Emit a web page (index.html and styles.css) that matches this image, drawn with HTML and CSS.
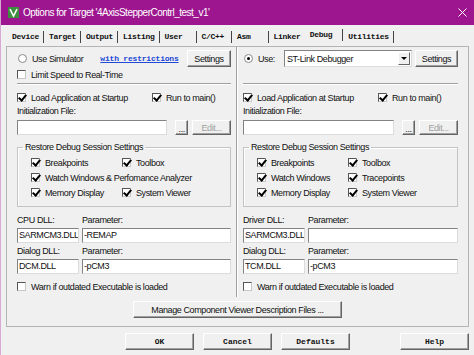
FILE: index.html
```html
<!DOCTYPE html>
<html lang="en">
<head>
  <meta charset="UTF-8">
  <title>Options for Target</title>
  <link rel="stylesheet" href="styles.css">
</head>
<body>
  <div class="window">
    <div class="titlebar">
      <svg class="app-icon" viewBox="0 0 11 11">
        <rect width="11" height="11" fill="#3c8f3c"/>
        <path d="M2 2.2 L5.5 9 L9 2.2" stroke="#fff" stroke-width="1.6" fill="none"/>
      </svg>
      <span class="title">Options for Target '4AxisStepperContrl_test_v1'</span>
      <svg class="close" viewBox="0 0 9 9">
        <path d="M0.5 0.5 L8.5 8.5 M8.5 0.5 L0.5 8.5" stroke="#fff" stroke-width="1"/>
      </svg>
    </div>

    <div class="tabs">
      <span class="tab">Device</span>
      <span class="tab">Target</span>
      <span class="tab">Output</span>
      <span class="tab">Listing</span>
      <span class="tab tab-user">User</span>
      <span class="tab tab-cpp">C/C++</span>
      <span class="tab tab-asm">Asm</span>
      <span class="tab tab-linker">Linker</span>
      <span class="tab active">Debug</span>
      <span class="tab">Utilities</span>
    </div>

    <div class="panel">
      <div class="cols">
        <!-- simulator side -->
        <div class="col col-left">
          <div class="top-row">
            <span class="radio"></span><span>Use Simulator</span>
            <a class="link">with restrictions</a>
            <button class="btn btn-settings">Settings</button>
          </div>
          <div class="line"><span class="cb"></span>Limit Speed to Real-Time</div>
          <div class="sep"></div>
          <div class="line pair">
            <span class="opt"><span class="cb on"></span>Load Application at Startup</span>
            <span class="opt"><span class="cb on"></span>Run to main()</span>
          </div>
          <div class="label">Initialization File:</div>
          <div class="file-row">
            <span class="field"></span>
            <button class="btn btn-dots">...</button>
            <button class="btn btn-edit" disabled>Edit...</button>
          </div>
          <fieldset class="group">
            <legend>Restore Debug Session Settings</legend>
            <div class="group-grid">
              <span class="opt"><span class="cb on"></span>Breakpoints</span>
              <span class="opt"><span class="cb on"></span>Toolbox</span>
              <span class="opt span2"><span class="cb on"></span>Watch Windows &amp; Perfomance Analyzer</span>
              <span class="opt"><span class="cb on"></span>Memory Display</span>
              <span class="opt"><span class="cb on"></span>System Viewer</span>
            </div>
          </fieldset>
          <div class="dll-grid">
            <span class="label">CPU DLL:</span><span class="label">Parameter:</span>
            <span class="field">SARMCM3.DLL</span><span class="field">-REMAP</span>
            <span class="label">Dialog DLL:</span><span class="label">Parameter:</span>
            <span class="field">DCM.DLL</span><span class="field">-pCM3</span>
          </div>
          <div class="line warn"><span class="cb"></span>Warn if outdated Executable is loaded</div>
        </div>

        <!-- target debugger side -->
        <div class="col col-right">
          <div class="top-row">
            <span class="radio on"></span><span>Use:</span>
            <div class="select">
              <span class="select-text">ST-Link Debugger</span>
              <span class="select-arrow"></span>
            </div>
            <button class="btn btn-settings">Settings</button>
          </div>
          <div class="line"></div>
          <div class="sep"></div>
          <div class="line pair">
            <span class="opt"><span class="cb on"></span>Load Application at Startup</span>
            <span class="opt"><span class="cb on"></span>Run to main()</span>
          </div>
          <div class="label">Initialization File:</div>
          <div class="file-row">
            <span class="field"></span>
            <button class="btn btn-dots">...</button>
            <button class="btn btn-edit" disabled>Edit...</button>
          </div>
          <fieldset class="group">
            <legend>Restore Debug Session Settings</legend>
            <div class="group-grid">
              <span class="opt"><span class="cb on"></span>Breakpoints</span>
              <span class="opt"><span class="cb on"></span>Toolbox</span>
              <span class="opt"><span class="cb on"></span>Watch Windows</span>
              <span class="opt"><span class="cb on"></span>Tracepoints</span>
              <span class="opt"><span class="cb on"></span>Memory Display</span>
              <span class="opt"><span class="cb on"></span>System Viewer</span>
            </div>
          </fieldset>
          <div class="dll-grid">
            <span class="label">Driver DLL:</span><span class="label">Parameter:</span>
            <span class="field">SARMCM3.DLL</span><span class="field"></span>
            <span class="label">Dialog DLL:</span><span class="label">Parameter:</span>
            <span class="field">TCM.DLL</span><span class="field">-pCM3</span>
          </div>
          <div class="line warn"><span class="cb"></span>Warn if outdated Executable is loaded</div>
        </div>
      </div>

      <button class="btn btn-manage">Manage Component Viewer Description Files ...</button>
    </div>

    <div class="footer">
      <button class="btn btn-foot">OK</button>
      <button class="btn btn-foot">Cancel</button>
      <button class="btn btn-foot">Defaults</button>
      <button class="btn btn-foot btn-help">Help</button>
    </div>
  </div>
</body>
</html>
```

FILE: styles.css
```css
* {
  box-sizing: border-box;
}

body {
  margin: 0;
  font-family: "Liberation Sans", Arial, sans-serif;
  font-size: 9px;
  letter-spacing: -0.4px;
  line-height: 12px;
  color: #111;
  background: #f0f0f0;
}

.window {
  width: 474px;
  height: 355px;
  background: #f0f0f0;
  border-left: 1px solid #d6a9d2;
  overflow: hidden;
}

/* title bar */
.titlebar {
  height: 25px;
  background: #9d168f;
  color: #fff;
  display: flex;
  align-items: center;
  padding: 0 7px 0 7px;
}

.app-icon {
  width: 11px;
  height: 11px;
  margin-right: 4px;
}

.title {
  flex: 1;
  font-size: 10px;
  letter-spacing: -0.5px;
}

.close {
  width: 9px;
  height: 9px;
}

/* tab strip */
.tabs {
  display: flex;
  align-items: center;
  height: 21px;
  padding: 3px 0 0 6px;
  font-family: "Liberation Mono", monospace;
  font-weight: bold;
  font-size: 8px;
  letter-spacing: -0.3px;
}

.tab {
  padding: 0 4px 0 5px;
  line-height: 12px;
  border-right: 1px solid #444;
}

.tab-user {
  padding-right: 13px;
}

.tab-cpp {
  padding-right: 7px;
}

.tab-asm {
  padding-right: 17px;
}

.tab-linker {
  border-right: none;
}

.tab.active {
  padding-right: 10px;
  transform: translateY(-2px);
}

/* main panel */
.panel {
  margin: 0 5px;
  height: 281px;
  border: 1px solid #b4b4b4;
  display: flex;
  flex-direction: column;
}

.cols {
  display: flex;
  height: 250px;
}

.col-left {
  width: 229px;
  padding: 0 5px 0 10px;
}

.col-right {
  flex: 1;
  padding: 0 10px 0 6px;
  border-left: 1px solid #a0a0a0;
  box-shadow: inset 1px 0 #fff;
}

.top-row {
  display: flex;
  align-items: center;
  height: 17px;
  margin-top: 3px;
  white-space: nowrap;
}

.line {
  display: flex;
  align-items: center;
  height: 13px;
  margin-top: 1px;
  white-space: nowrap;
}

.pair {
  display: grid;
  grid-template-columns: 135px auto;
  margin-top: 6px;
}

.opt {
  display: flex;
  align-items: center;
  white-space: nowrap;
}

.sep {
  margin-top: 2px;
  border-top: 1px solid #a0a0a0;
  border-bottom: 1px solid #fff;
}

.label {
  display: block;
  height: 12px;
  margin-top: 1px;
  white-space: nowrap;
}

.file-row {
  display: flex;
  height: 15px;
  margin-top: 3px;
}

.file-row .field {
  width: 151px;
}

/* controls */
.radio {
  width: 9px;
  height: 9px;
  margin: 0 5px 0 1px;
  border-radius: 50%;
  border: 1px solid #8a8a8a;
  background: #fff;
  display: grid;
  place-items: center;
  flex: none;
}

.radio.on::after {
  content: "";
  width: 3px;
  height: 3px;
  border-radius: 50%;
  background: #000;
}

.cb {
  position: relative;
  width: 9px;
  height: 9px;
  margin-right: 5px;
  border: 1px solid;
  border-color: #555 #c8c8c8 #c8c8c8 #555;
  background: #fff;
  flex: none;
}

.cb.on::after {
  content: "";
  position: absolute;
  left: 2px;
  top: -1px;
  width: 3px;
  height: 6px;
  border-right: 2px solid #000;
  border-bottom: 2px solid #000;
  transform: rotate(40deg);
}

.field {
  display: block;
  height: 15px;
  padding: 0 1px;
  line-height: 13px;
  background: #fff;
  border: 1px solid;
  border-color: #838383 #dcdcdc #dcdcdc #838383;
  white-space: nowrap;
  overflow: hidden;
}

.link {
  margin-left: 17px;
  color: #2148d6;
  text-decoration: underline;
  font-family: "Liberation Mono", monospace;
  font-weight: bold;
  font-size: 8px;
  letter-spacing: -0.2px;
}

.btn {
  font: inherit;
  letter-spacing: inherit;
  height: 17px;
  padding: 0;
  color: #111;
  background: #f0f0f0;
  border: 1px solid;
  border-color: #fff #646464 #646464 #fff;
  box-shadow: inset -1px -1px #a0a0a0;
  white-space: nowrap;
}

.btn-settings {
  width: 44px;
  margin-left: auto;
}

.btn-dots {
  width: 13px;
  height: 15px;
  margin-left: 8px;
  line-height: 16px;
}

.btn-edit {
  width: 39px;
  height: 15px;
  margin-left: 4px;
  color: #a0a0a0;
}

.select {
  flex: 1;
  height: 17px;
  margin: 0 3px 0 9px;
  padding-left: 2px;
  display: flex;
  align-items: center;
  background: #fff;
  border: 1px solid;
  border-color: #838383 #dcdcdc #dcdcdc #838383;
}

.select-text {
  flex: 1;
}

.select-arrow {
  width: 12px;
  height: 13px;
  margin-right: 1px;
  display: flex;
  align-items: center;
  justify-content: center;
  background: #f0f0f0;
  border: 1px solid;
  border-color: #fff #646464 #646464 #fff;
}

.select-arrow::before {
  content: "";
  border: 3px solid transparent;
  border-top: 3px solid #000;
  border-bottom: 0;
}

.col-right .btn-settings {
  width: 43px;
  margin-left: 0;
}

/* group box */
.group {
  margin: 6px 0 0;
  padding: 2px 0 6px 5px;
  min-width: 0;
  border: 1px solid #c4c4c4;
  box-shadow: inset 1px 1px #fff;
}

.group legend {
  padding: 0 2px;
  line-height: 12px;
}

.group-grid {
  display: grid;
  grid-template-columns: 91px auto;
  grid-auto-rows: 15px;
  align-items: center;
  padding-left: 8px;
}

.span2 {
  grid-column: 1 / span 2;
}

.dll-grid {
  display: grid;
  grid-template-columns: 62px 1fr;
  grid-template-rows: 12px 15px 12px 15px;
  column-gap: 3px;
  row-gap: 2px;
  margin-top: 7px;
}

.dll-grid .label {
  margin-top: 0;
}

.warn {
  margin-top: 6px;
}

.btn-manage {
  align-self: center;
  width: 209px;
  margin-top: 4px;
}

/* dialog buttons */
.footer {
  display: flex;
  gap: 9px;
  padding: 6px 5px 0 124px;
}

.btn-foot {
  width: 69px;
  font-family: "Liberation Mono", monospace;
  font-weight: bold;
  font-size: 8px;
  letter-spacing: 0;
}

.btn-help {
  margin-left: auto;
}
```
